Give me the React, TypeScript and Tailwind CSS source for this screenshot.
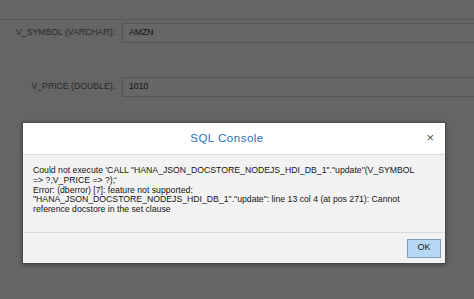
import React from 'react';

const font = { fontFamily: '"Liberation Sans", Arial, sans-serif' };

const FormRow: React.FC<{ label: string; value: string; className?: string }> = ({ label, value, className }) => (
  <div className={`flex items-center ${className ?? ''}`}>
    <div className="w-[116px] shrink-0 pr-[1px] text-right text-[8.7px] text-[#2a2a2a]">{label}</div>
    <div className="ml-[6px] flex h-[20px] flex-1 items-center border border-[#545454] bg-[#676767] pl-[6px] text-[8.7px] text-[#111]">
      {value}
    </div>
  </div>
);

export default function App() {
  return (
    <div className="relative h-[299px] w-[474px] overflow-hidden bg-[#656565]" style={font}>
      {/* background form, dimmed */}
      <div className="h-[20px] border-b border-[#585858]" />
      <div className="mr-[-10px]">
        <FormRow label="V_SYMBOL (VARCHAR):" value="AMZN" className="mt-[3px]" />
        <FormRow label="V_PRICE (DOUBLE):" value="1010" className="mt-[34px]" />
      </div>

      {/* SQL Console dialog */}
      <div className="absolute left-[22px] top-[122px] flex h-[142px] w-[424px] flex-col border border-[#4a4a4a] bg-[#f2f2f2] shadow-[0_1px_4px_rgba(0,0,0,0.35)]">
        <div className="relative flex h-[32px] shrink-0 items-center justify-center border-b border-[#dcdcdc] bg-white">
          <span className="ml-[-14px] text-[11.5px] tracking-[0.5px] text-[#2a6ebb]">SQL Console</span>
          <span className="absolute right-[11px] top-[8px] text-[13px] leading-none text-[#555]">×</span>
        </div>
        <div className="h-[78px] shrink-0 whitespace-nowrap border-b border-[#dcdcdc] px-[10px] pt-[11px] text-[8.7px] leading-[9.8px] text-[#141414]">
          <p>Could not execute 'CALL "HANA_JSON_DOCSTORE_NODEJS_HDI_DB_1"."update"(V_SYMBOL</p>
          <p>=&gt; ?,V_PRICE =&gt; ?);'</p>
          <p>Error: (dberror) [7]: feature not supported:</p>
          <p>"HANA_JSON_DOCSTORE_NODEJS_HDI_DB_1"."update": line 13 col 4 (at pos 271): Cannot</p>
          <p>reference docstore in the set clause</p>
        </div>
        <div className="flex flex-1 items-center justify-end pr-[4px]">
          <button className="h-[19px] w-[34px] border border-[#7f9dbd] bg-[#b6d8f5] text-[9px] text-[#1a1a1a]">
            OK
          </button>
        </div>
      </div>
    </div>
  );
}
